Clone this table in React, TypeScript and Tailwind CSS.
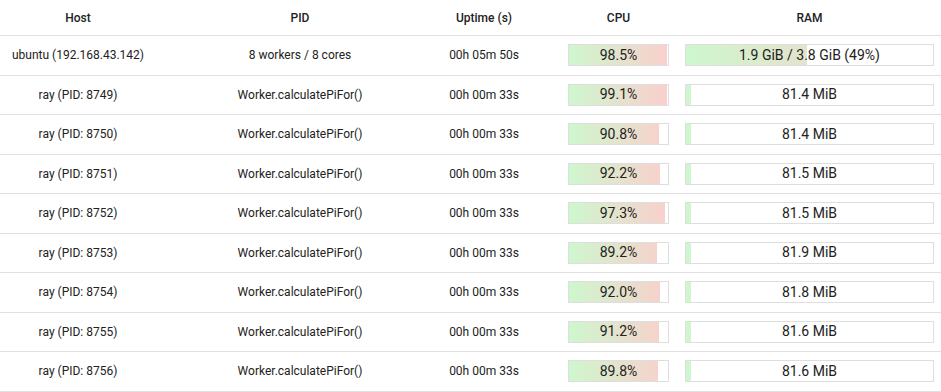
const green = [206, 247, 206];
const red = [250, 207, 204];

const mix = (p: number) => {
  const t = Math.max(0, Math.min(p, 100)) / 100;
  const c = green.map((g, i) => Math.round(g + (red[i] - g) * t));
  return `rgb(${c.join(",")})`;
};

const UsageBar = ({ percent, text }: { percent: number; text: string }) => (
  <div className="relative h-[22px] w-full border border-[#dedede] bg-white">
    <div
      className="absolute inset-y-0 left-0"
      style={{
        width: `${percent}%`,
        backgroundImage: `linear-gradient(to right, rgb(${green.join(",")}), ${mix(percent)})`,
      }}
    />
    <div className="relative flex h-full items-center justify-center text-[14px] text-[#222]">
      {text}
    </div>
  </div>
);

type Row = {
  host: string;
  pid: string;
  uptime: string;
  cpu: number;
  ram: number;
  ramText: string;
};

const rows: Row[] = [
  { host: "ubuntu (192.168.43.142)", pid: "8 workers / 8 cores", uptime: "00h 05m 50s", cpu: 98.5, ram: 49, ramText: "1.9 GiB / 3.8 GiB (49%)" },
  { host: "ray (PID: 8749)", pid: "Worker.calculatePiFor()", uptime: "00h 00m 33s", cpu: 99.1, ram: 2.1, ramText: "81.4 MiB" },
  { host: "ray (PID: 8750)", pid: "Worker.calculatePiFor()", uptime: "00h 00m 33s", cpu: 90.8, ram: 2.1, ramText: "81.4 MiB" },
  { host: "ray (PID: 8751)", pid: "Worker.calculatePiFor()", uptime: "00h 00m 33s", cpu: 92.2, ram: 2.1, ramText: "81.5 MiB" },
  { host: "ray (PID: 8752)", pid: "Worker.calculatePiFor()", uptime: "00h 00m 33s", cpu: 97.3, ram: 2.1, ramText: "81.5 MiB" },
  { host: "ray (PID: 8753)", pid: "Worker.calculatePiFor()", uptime: "00h 00m 33s", cpu: 89.2, ram: 2.1, ramText: "81.9 MiB" },
  { host: "ray (PID: 8754)", pid: "Worker.calculatePiFor()", uptime: "00h 00m 33s", cpu: 92.0, ram: 2.1, ramText: "81.8 MiB" },
  { host: "ray (PID: 8755)", pid: "Worker.calculatePiFor()", uptime: "00h 00m 33s", cpu: 91.2, ram: 2.1, ramText: "81.6 MiB" },
  { host: "ray (PID: 8756)", pid: "Worker.calculatePiFor()", uptime: "00h 00m 33s", cpu: 89.8, ram: 2.1, ramText: "81.6 MiB" },
];

export default function App() {
  return (
    <div className="h-[392px] w-[941px] overflow-hidden bg-white font-['Roboto',sans-serif] text-[12px] text-[#222]">
      {/* header */}
      <div className="flex h-[36px] items-center border-b border-[#e0e0e0] font-medium">
        <div className="w-[156px] text-center">Host</div>
        <div className="w-[288px] text-center">PID</div>
        <div className="w-[80px] text-center">Uptime (s)</div>
        <div className="w-[153px] pl-[44px] pr-[8px] text-center">CPU</div>
        <div className="w-[264px] pl-[8px] pr-[7px] text-center">RAM</div>
      </div>

      {rows.map((r) => (
        <div key={r.host} className="flex h-[39.5px] items-center border-b border-[#e0e0e0]">
          <div className="w-[156px] text-center">{r.host}</div>
          <div className="w-[288px] text-center">{r.pid}</div>
          <div className="w-[80px] whitespace-nowrap text-center">{r.uptime}</div>
          <div className="w-[153px] pl-[44px] pr-[8px]">
            <UsageBar percent={r.cpu} text={`${r.cpu.toFixed(1)}%`} />
          </div>
          <div className="w-[264px] pl-[8px] pr-[7px]">
            <UsageBar percent={r.ram} text={r.ramText} />
          </div>
        </div>
      ))}
    </div>
  );
}
